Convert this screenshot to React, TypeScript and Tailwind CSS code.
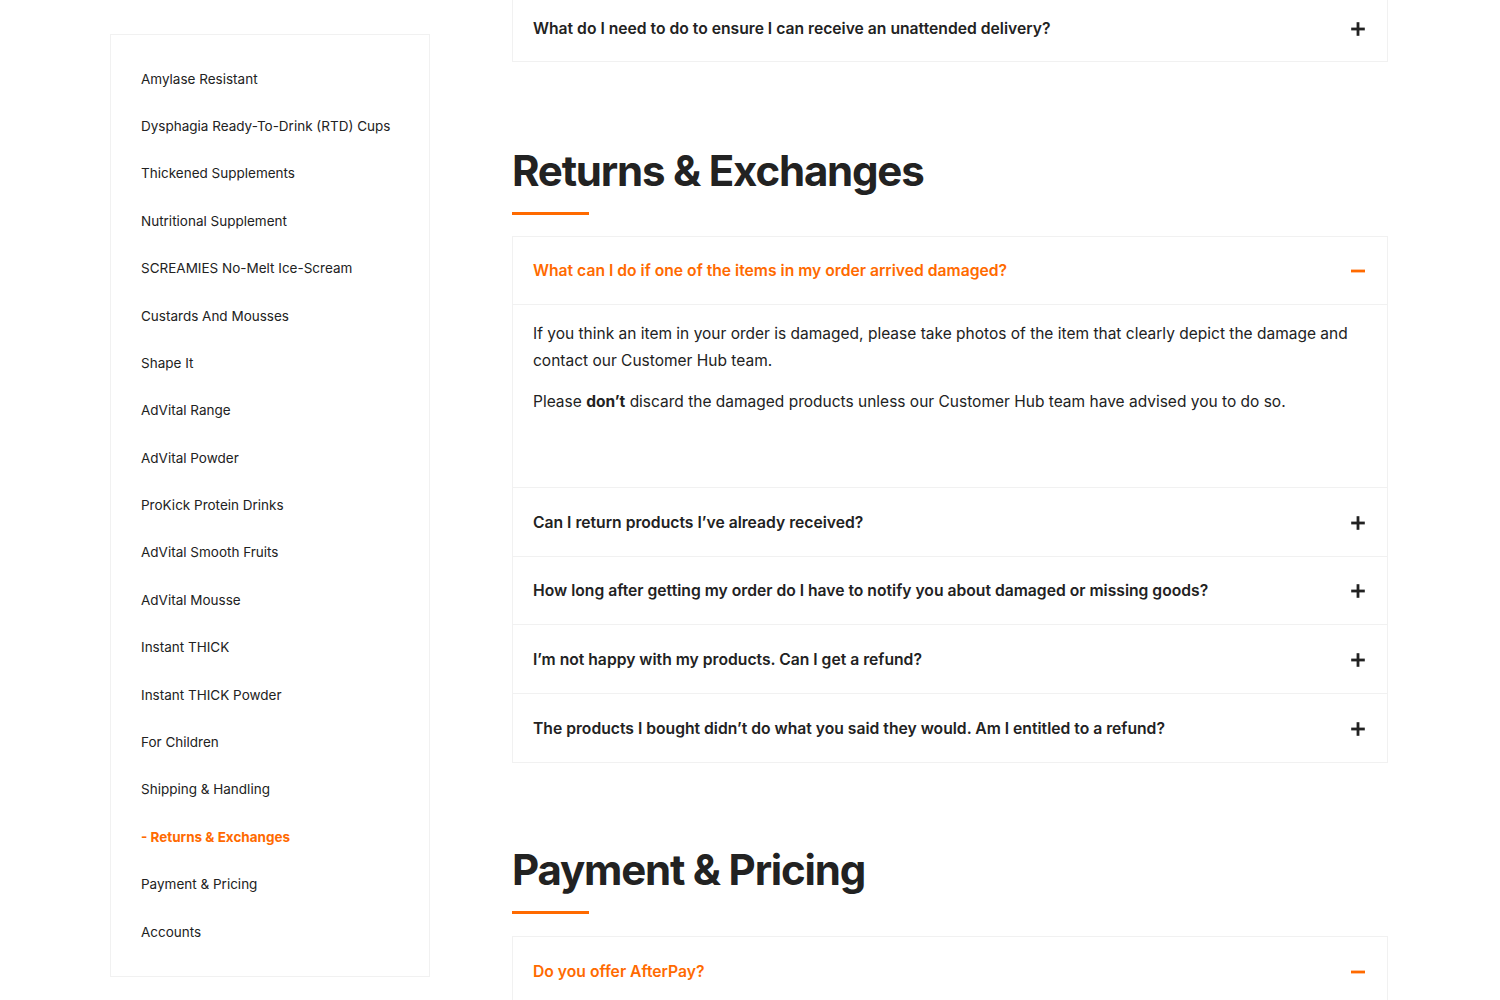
import React from 'react';

const sidebarItems = [
  'Amylase Resistant',
  'Dysphagia Ready-To-Drink (RTD) Cups',
  'Thickened Supplements',
  'Nutritional Supplement',
  'SCREAMIES No-Melt Ice-Scream',
  'Custards And Mousses',
  'Shape It',
  'AdVital Range',
  'AdVital Powder',
  'ProKick Protein Drinks',
  'AdVital Smooth Fruits',
  'AdVital Mousse',
  'Instant THICK',
  'Instant THICK Powder',
  'For Children',
  'Shipping & Handling',
  'Returns & Exchanges',
  'Payment & Pricing',
  'Accounts',
];

const returnsQuestions = [
  'Can I return products I’ve already received?',
  'How long after getting my order do I have to notify you about damaged or missing goods?',
  'I’m not happy with my products. Can I get a refund?',
  'The products I bought didn’t do what you said they would. Am I entitled to a refund?',
];

function PlusIcon() {
  return (
    <svg width="16" height="16" viewBox="0 0 16 16" aria-hidden="true">
      <rect x="6.6" y="1.2" width="2.8" height="13.6" fill="#222" />
      <rect x="1.2" y="6.6" width="13.6" height="2.8" fill="#222" />
    </svg>
  );
}

function MinusIcon() {
  return (
    <svg width="16" height="16" viewBox="0 0 16 16" aria-hidden="true">
      <rect x="1" y="6.6" width="14" height="2.8" fill="#ff6a00" />
    </svg>
  );
}

function Question({ text, open = false, first = false }: { text: string; open?: boolean; first?: boolean }) {
  return (
    <div
      className={`flex items-center justify-between px-5 border-b border-[#f1f1f1] last:border-b-0 ${
        first ? 'h-[68.5px] pt-[6px]' : 'h-[68.5px] pt-[2px]'
      }`}
    >
      <span className={`text-[15.7px] font-semibold ${open ? 'text-[#ff6a00]' : 'text-[#222]'}`}>{text}</span>
      <span className="mr-[1px]">{open ? <MinusIcon /> : <PlusIcon />}</span>
    </div>
  );
}

function SectionTitle({ title }: { title: string }) {
  return (
    <div>
      <h2 className="text-[42px] leading-[55px] font-bold text-[#222] tracking-[-1.2px]">{title}</h2>
      <div className="mt-[14px] h-[3px] w-[77px] bg-[#ff6a00]" />
    </div>
  );
}

export default function App() {
  return (
    <div className="min-h-[1000px] bg-white text-[#222]" style={{ fontFamily: 'Inter, "Noto Sans", sans-serif' }}>
      <div className="flex h-[1000px] overflow-hidden">
        {/* Sidebar */}
        <div className="ml-[110px] mt-[34px] w-[320px] shrink-0 self-start">
          <ul className="border border-[#f1f1f1] pt-[20px] pb-[21px] pl-[30px]">
            {sidebarItems.map((item) => (
              <li
                key={item}
                className={`h-[47.4px] flex items-center text-[13.5px] ${
                  item === 'Returns & Exchanges' ? 'font-bold text-[#ff6a00]' : 'text-[#222]'
                }`}
              >
                {item === 'Returns & Exchanges' ? `- ${item}` : item}
              </li>
            ))}
          </ul>
        </div>

        {/* Main */}
        <div className="ml-[82px] w-[876px] shrink-0 -mt-[9px]">
          <div className="border border-[#f1f1f1]">
            <Question text="What do I need to do to ensure I can receive an unattended delivery?" first />
          </div>

          <div className="mt-[81px]">
            <SectionTitle title="Returns & Exchanges" />
          </div>

          <div className="mt-[21px] border border-[#f1f1f1]">
            <Question text="What can I do if one of the items in my order arrived damaged?" open />
            <div className="px-5 pt-[15px] pb-[72px] border-b border-[#f1f1f1] text-[15.5px] leading-[27px] text-[#222]">
              <p>
                If you think an item in your order is damaged, please take photos of the item that clearly depict the damage and contact our Customer Hub team.
              </p>
              <p className="mt-[14px]">
                Please <strong className="font-bold">don’t</strong> discard the damaged products unless our Customer Hub team have advised you to do so.
              </p>
            </div>
            {returnsQuestions.map((q) => (
              <Question key={q} text={q} />
            ))}
          </div>

          <div className="mt-[79px]">
            <SectionTitle title="Payment & Pricing" />
          </div>

          <div className="mt-[22px] border border-[#f1f1f1]">
            <Question text="Do you offer AfterPay?" open />
          </div>
        </div>
      </div>
    </div>
  );
}
